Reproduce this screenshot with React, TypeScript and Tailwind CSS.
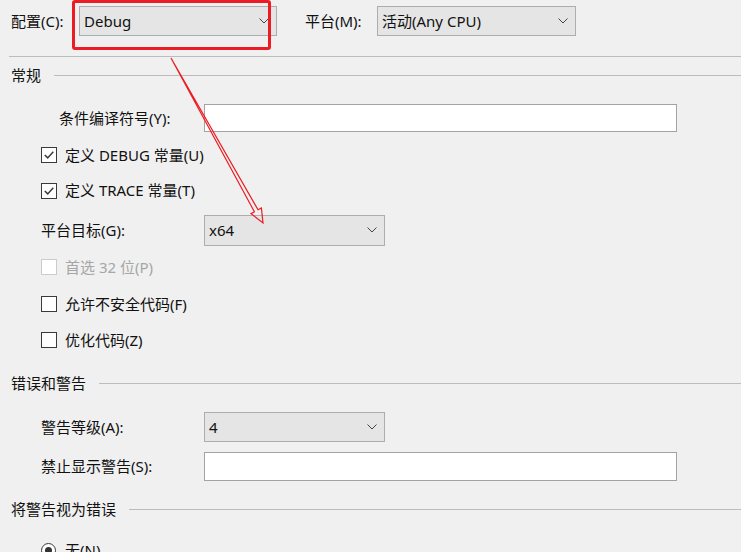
import React from "react";

const FONT = { fontFamily: "'Noto Sans', 'Noto Sans CJK SC', sans-serif" };

function Chevron() {
  return (
    <svg width="10" height="6" viewBox="0 0 10 6" className="shrink-0">
      <path d="M0.5 0.5 L5 5 L9.5 0.5" fill="none" stroke="#444" strokeWidth="1" />
    </svg>
  );
}

function Dropdown({ value, w, h = 30 }: { value: string; w: number; h?: number }) {
  return (
    <div
      className="flex items-center justify-between bg-[#e5e5e5] border border-[#adadad] pl-[4px] pr-[7px] text-[15px] text-[#111]"
      style={{ width: w, height: h }}
    >
      <span className="leading-none">{value}</span>
      <Chevron />
    </div>
  );
}

function Input({ h = 28 }: { h?: number }) {
  return <div className="w-[473px] bg-white border border-[#a3a3a3]" style={{ height: h }} />;
}

function Checkbox({ checked, disabled }: { checked?: boolean; disabled?: boolean }) {
  return (
    <div
      className={
        "w-[16px] h-[16px] shrink-0 border-[1.5px] bg-white flex items-center justify-center " +
        (disabled ? "border-[#cccccc]" : "border-[#3a3a3a]")
      }
    >
      {checked && (
        <svg width="12" height="12" viewBox="0 0 12 12">
          <path d="M1.8 6 L4.7 8.9 L10.3 2.8" fill="none" stroke="#3a3a3a" strokeWidth="1.5" />
        </svg>
      )}
    </div>
  );
}

function CheckRow({ label, checked, disabled, h }: { label: string; checked?: boolean; disabled?: boolean; h: number }) {
  return (
    <div className="flex items-center pl-[41px]" style={{ height: h }}>
      <Checkbox checked={checked} disabled={disabled} />
      <span className={"ml-[8px] text-[15px] leading-none " + (disabled ? "text-[#a6a6a6]" : "text-[#111]")}>{label}</span>
    </div>
  );
}

function Section({ label, h }: { label: string; h: number }) {
  return (
    <div className="flex items-center pl-[11px]" style={{ height: h }}>
      <span className="text-[15px] leading-none text-[#111] whitespace-nowrap">{label}</span>
      <div className="ml-[13px] flex-1 h-px bg-[#bcbcbc]" />
    </div>
  );
}

function FieldRow({ label, indent, h, children }: { label: string; indent: number; h: number; children: React.ReactNode }) {
  return (
    <div className="flex items-center" style={{ height: h }}>
      <div className="shrink-0 text-[15px] leading-none text-[#111]" style={{ width: 204, paddingLeft: indent }}>
        {label}
      </div>
      {children}
    </div>
  );
}

export default function App() {
  return (
    <div className="relative w-[741px] h-[552px] overflow-hidden bg-[#f0f0f0]" style={FONT}>
      {/* Top row */}
      <div className="flex items-center h-[42px]">
        <div className="w-[79px] pl-[11px] text-[15px] leading-none text-[#111]">配置(C):</div>
        <Dropdown value="Debug" w={198} />
        <div className="w-[100px] pl-[28px] text-[15px] leading-none text-[#111]">平台(M):</div>
        <Dropdown value="活动(Any CPU)" w={199} />
      </div>
      <div className="mt-[14px] ml-[9px] h-px bg-[#bcbcbc]" />

      <Section label="常规" h={36} />
      <FieldRow label="条件编译符号(Y):" indent={59} h={50}>
        <Input h={28} />
      </FieldRow>
      <CheckRow label="定义 DEBUG 常量(U)" checked h={24} />
      <CheckRow label="定义 TRACE 常量(T)" checked h={47} />
      <FieldRow label="平台目标(G):" indent={41} h={32}>
        <Dropdown value="x64" w={181} h={31} />
      </FieldRow>
      <CheckRow label="首选 32 位(P)" disabled h={42} />
      <CheckRow label="允许不安全代码(F)" h={32} />
      <CheckRow label="优化代码(Z)" h={40} />

      <Section label="错误和警告" h={46} />
      <FieldRow label="警告等级(A):" indent={41} h={42}>
        <Dropdown value="4" w={181} h={30} />
      </FieldRow>
      <FieldRow label="禁止显示警告(S):" indent={41} h={37}>
        <Input h={29} />
      </FieldRow>

      <Section label="将警告视为错误" h={48} />
      <div className="flex items-center pl-[41px] h-[34px]">
        <div className="w-[15px] h-[15px] rounded-full border-[1.5px] border-[#3a3a3a] bg-white flex items-center justify-center">
          <div className="w-[7px] h-[7px] rounded-full bg-[#333]" />
        </div>
        <span className="ml-[9px] text-[15px] leading-none text-[#111]">无(N)</span>
      </div>

      {/* Annotation overlay: red rectangle */}
      <div className="absolute left-[72px] top-0 w-[199px] h-[50px] border-[3px] border-[#ec1c24] rounded-[3px]" />

      {/* Annotation overlay: arrow */}
      <svg className="absolute left-0 top-0 pointer-events-none" width="741" height="552">
        <polygon
          points="171,58 254.4,211.8 251,213.7 263,223 261.4,207.9 258,209.8"
          fill="none"
          stroke="#ec1c24"
          strokeWidth="1.2"
          strokeLinejoin="miter"
        />
      </svg>
    </div>
  );
}
